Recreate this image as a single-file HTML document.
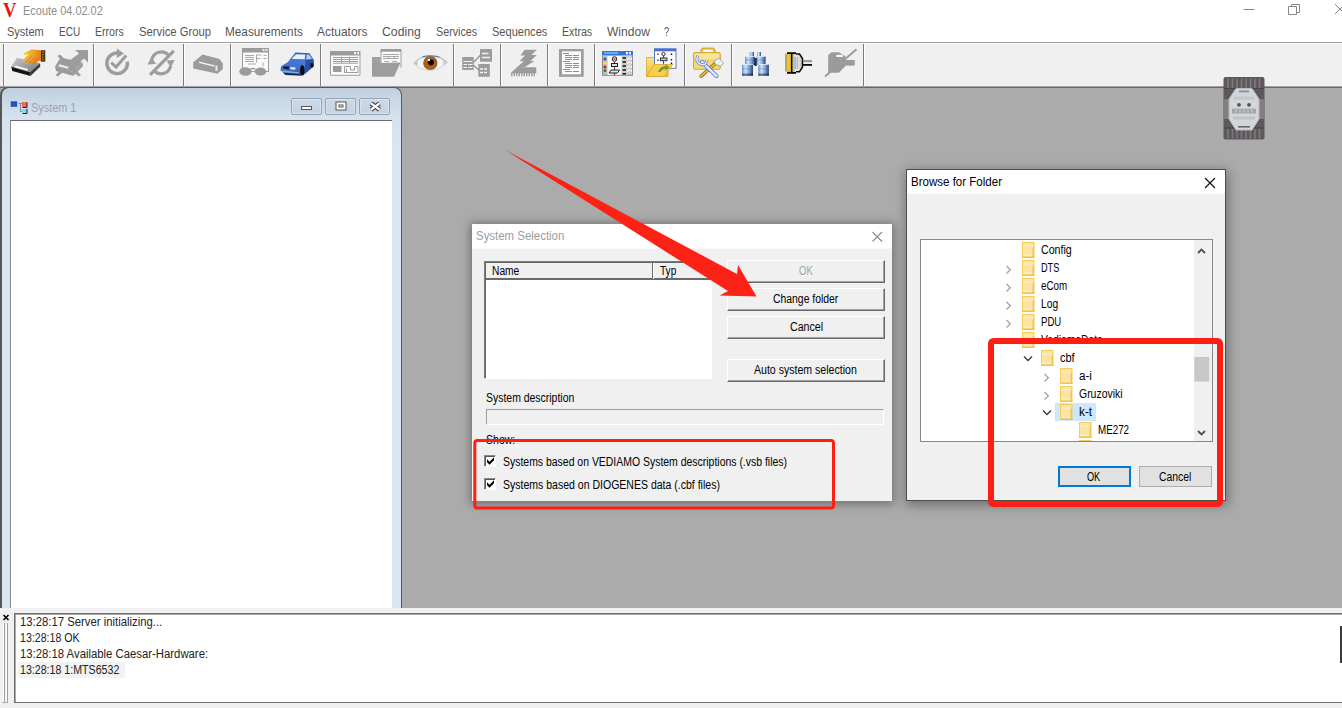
<!DOCTYPE html>
<html lang="en">
<head>
<meta charset="utf-8">
<title>Ecoute 04.02.02</title>
<style>
html,body{margin:0;padding:0;}
body{width:1342px;height:708px;overflow:hidden;background:#fff;position:relative;font-family:"Liberation Sans",sans-serif;font-size:12px;color:#000;}
.abs{position:absolute;}
.t{position:absolute;white-space:nowrap;line-height:1;}
#titlebar{left:0;top:0;width:1342px;height:22px;background:#fff;}
#menubar{left:0;top:22px;width:1342px;height:20px;background:#fff;}
#menubar .t{font-size:12px;color:#555;top:5px;}
#tbline{left:0;top:42px;width:1342px;height:1px;background:#a0a0a0;}
#toolbar{left:0;top:43px;width:1342px;height:43px;background:#f0f0f0;box-shadow:inset 0 1px 0 #fdfdfd;}
.sep{position:absolute;top:1px;width:1px;height:42px;background:#7c7c7c;box-shadow:1px 0 0 #fcfcfc;}
#mdi{left:0;top:86px;width:1342px;height:522px;background:#ababab;}
#bottom{left:0;top:608px;width:1342px;height:100px;background:#f0f0f0;}

.ms{font-size:11px;color:#000;}
.lg{font-size:12px;color:#1a1a1a;}
.tr{font-size:12px;color:#000;}
.cbtn{position:absolute;top:11px;width:31px;height:17px;box-sizing:border-box;border:1px solid #94a4b5;border-radius:2px;background:linear-gradient(#cbd9e7,#c3d3e3);box-shadow:inset 0 0 0 1px rgba(255,255,255,.35);}
.b3d{position:absolute;width:158px;height:23px;box-sizing:border-box;background:#f0f0f0;border-top:1px solid #fff;border-left:1px solid #fff;border-right:1px solid #696969;border-bottom:1px solid #696969;box-shadow:inset -1px -1px 0 #a0a0a0;font-size:11px;line-height:19px;text-align:center;color:#000;white-space:nowrap;}
.chk{position:absolute;width:12px;height:12px;box-sizing:border-box;background:#fff;border-top:1px solid #8a8a8a;border-left:1px solid #8a8a8a;border-right:1px solid #fff;border-bottom:1px solid #fff;box-shadow:inset 1px 1px 0 #555;}
.chk svg{position:absolute;left:-1.5px;top:-2px;}
.wbtn{position:absolute;width:73px;height:21px;box-sizing:border-box;background:#e1e1e1;font-size:12px;text-align:center;color:#000;line-height:17px;}
</style>
</head>
<body>
<!-- ===== title bar ===== -->
<div id="titlebar" class="abs">
  <span class="t" style="left:2.5px;top:0px;font-family:'Liberation Serif',serif;font-weight:bold;font-size:21px;color:#e8140c;transform-origin:0 0;transform:scaleX(.89);">V</span>
  <svg class="abs" style="left:1236px;top:0" width="106" height="22" viewBox="0 0 106 22">
    <path d="M7.5 9.5h11" stroke="#858585" stroke-width="1" fill="none"/>
    <path d="M52.5 6.5h8v8h-8zM55.5 6.5v-2h8v8h-3" stroke="#858585" stroke-width="1" fill="none"/>
    <path d="M99 4l10 10M109 4l-10 10" stroke="#858585" stroke-width="1" fill="none"/>
  </svg>
</div>
<!-- ===== menu bar ===== -->
<div id="menubar" class="abs">
</div>
<div id="tbline" class="abs"></div>
<!-- ===== toolbar ===== -->
<div id="toolbar" class="abs">
  <div class="sep" style="left:3px"></div>
  <div class="sep" style="left:93px"></div>
  <div class="sep" style="left:183px"></div>
  <div class="sep" style="left:230px"></div>
  <div class="sep" style="left:320px"></div>
  <div class="sep" style="left:453px"></div>
  <div class="sep" style="left:500px"></div>
  <div class="sep" style="left:547px"></div>
  <div class="sep" style="left:594px"></div>
  <div class="sep" style="left:684px"></div>
  <div class="sep" style="left:731px"></div>
  <div class="sep" style="left:863px"></div>
    <svg class="abs" style="left:0;top:0" width="1342" height="43" viewBox="0 43 1342 43">
    <defs>
      <linearGradient id="gHand" x1="0" y1="0" x2="1" y2="0"><stop offset="0" stop-color="#f7cf38"/><stop offset=".55" stop-color="#f3a622"/><stop offset="1" stop-color="#e07a1c"/></linearGradient>
      <linearGradient id="gTop" x1="0" y1="0" x2="1" y2="1"><stop offset="0" stop-color="#c9c9cc"/><stop offset="1" stop-color="#77787c"/></linearGradient>
      <linearGradient id="gBino" x1="0" y1="0" x2="1" y2="0"><stop offset="0" stop-color="#6a8fc8"/><stop offset=".3" stop-color="#cfe4f8"/><stop offset=".65" stop-color="#7da2da"/><stop offset="1" stop-color="#2c4474"/></linearGradient>
      <linearGradient id="gBinoV" x1="0" y1="0" x2="0" y2="1"><stop offset="0" stop-color="#000" stop-opacity="0"/><stop offset=".75" stop-color="#000" stop-opacity="0"/><stop offset="1" stop-color="#000" stop-opacity=".75"/></linearGradient>
      <linearGradient id="gFold" x1="0" y1="0" x2="0" y2="1"><stop offset="0" stop-color="#fbe58a"/><stop offset="1" stop-color="#eebb30"/></linearGradient>
      <linearGradient id="gPin" x1="0" y1="0" x2="1" y2="0"><stop offset="0" stop-color="#8a8a90"/><stop offset=".5" stop-color="#f6d21c"/><stop offset="1" stop-color="#c9a238"/></linearGradient>
      <linearGradient id="gPlug" x1="0" y1="0" x2="1" y2="0"><stop offset="0" stop-color="#b4b4b4"/><stop offset=".4" stop-color="#ececec"/><stop offset="1" stop-color="#c4c4c4"/></linearGradient>
      <radialGradient id="gIris" cx=".5" cy=".5" r=".5"><stop offset="0" stop-color="#7e3a0c"/><stop offset=".6" stop-color="#b4661c"/><stop offset="1" stop-color="#a05414"/></radialGradient>
      <linearGradient id="gCar" x1="0" y1="0" x2="0" y2="1"><stop offset="0" stop-color="#2a5cc8"/><stop offset=".5" stop-color="#4f80d8"/><stop offset="1" stop-color="#2850a8"/></linearGradient>
    </defs>
    <!-- 1: device + hand -->
    <g>
      <path d="M17 57.800L40 63.300L30 72.300L11.300 66.800z" fill="url(#gTop)"/>
      <path d="M11.300 66.800L30 72.300L30.500 76L12.300 71z" fill="#131313"/>
      <path d="M30 72.300L40 63.300L40.300 66.500L30.500 76z" fill="#38383a"/>
      <path d="M14.800 65.300L28 69L27.600 70.800L14.300 67.200z" fill="#f6f6f6"/>
      <path d="M41 50.200h4.300v11.500H41z" fill="#44380f"/>
      <path d="M43 51.500v9" stroke="#b8a050" stroke-width="1.200" stroke-dasharray="1.300 1.200"/>
      <path d="M41 50.300L31.500 49.600L24.500 52.800L23.800 54.800L28.500 54.300L23.500 59.500L41 61z" fill="url(#gHand)"/>
      <path d="M30 55L23.800 61" stroke="#f3b82a" stroke-width="2.300" stroke-linecap="round"/>
      <path d="M33.500 56L27.200 62.500" stroke="#f0a428" stroke-width="2.300" stroke-linecap="round"/>
      <path d="M36.500 57L30.800 63.200" stroke="#ec9224" stroke-width="2.300" stroke-linecap="round"/>
      <path d="M39.500 58L34.500 63.300" stroke="#e67f20" stroke-width="2.200" stroke-linecap="round"/>
      <path d="M31.800 55.500L25.500 62M35 56.500L29 63M38 57.500L32.800 63.400" stroke="#c2531a" stroke-width=".7" opacity=".85"/>
    </g>
    <!-- 2: gray device w/ arrow + cross -->
    <g fill="#9c9c9c" stroke="none">
      <path d="M60.500 57.500L82.500 62.500L73 72L55 66.500z"/>
      <path d="M55 66.500L73 72L73.500 76L56 71z" fill="#999"/>
      <path d="M73 72L82.500 62.500L83 66L73.500 76z"/>
      <path d="M88 50H75l4 3.500L68.500 61.500l6 5.500L84 58.500l4 4z"/>
      <path d="M57.500 56l2.500-1.500L81 75l-2.500 1.500z"/>
      <path d="M55.500 75L68 63l2.500 2L58 76.500z"/>
      <path d="M59 64.200l9.500 2.600l-.5 2l-9.500-2.600z" fill="#ededed"/>
    </g>
    <!-- 3: circular arrow + check -->
    <g fill="none" stroke="#9d9d9d">
      <path d="M119.500 53.300A10.300 10.300 0 1 0 127.300 61.500" stroke-width="3.400"/>
      <path d="M116.800 48.600l7.200 4.800l-7.200 4.600z" fill="#9d9d9d" stroke="none"/>
      <path d="M111.200 62.500l4.800 4.500L126.200 55.400" stroke-width="3"/>
    </g>
    <!-- 4: circle arrows + slash -->
    <g fill="none" stroke="#9d9d9d">
      <path d="M151.800 59.500A9.800 9.800 0 0 1 168.500 55" stroke-width="3.200"/>
      <path d="M170.600 66A9.800 9.800 0 0 1 154.500 71.300" stroke-width="3.200"/>
      <path d="M147.500 64.500l4-7.500l4.500 7z" fill="#9d9d9d" stroke="none"/>
      <path d="M166.500 60.500l4.200 7l4-7.500z" fill="#9d9d9d" stroke="none"/>
      <path d="M150 74.800L173.800 50.800" stroke-width="3.200"/>
    </g>
    <!-- 5: gray box/printer -->
    <g>
      <path d="M202.500 54.500L219.500 59L222.800 63.500V69L217.500 73.800L193.200 68.500V62.500z" fill="#9b9b9b"/>
      <path d="M199 61.500L214.500 65.300V66.800L199 63z" fill="#f0f0f0"/>
      <path d="M215.500 65.500h2v5.500h-2z" fill="#e8e8e8"/>
    </g>
    <!-- 6: window + glasses -->
    <g>
      <rect x="242" y="48" width="27" height="23.500" fill="#fbfbfb"/>
      <rect x="242" y="48" width="27" height="4.500" fill="#9b9b9b"/>
      <rect x="262.500" y="49" width="2" height="2" fill="#f0f0f0"/><rect x="265.500" y="49" width="2" height="2" fill="#f0f0f0"/>
      <path d="M242.500 52v19M268.500 52v19.500M242 71.500h27" stroke="#9b9b9b" stroke-width="1" fill="none"/>
      <path d="M245 55.500h9M245 57.500h9M245 59.500h9M245 61.500h9M256.500 54.500v8M256.500 55h5M256.500 58.500h4M263.500 55.500h3M263.500 58.500h3M248 64h8M263 62.500v4" stroke="#a8a8a8" stroke-width="1" fill="none"/>
      <ellipse cx="245.500" cy="71.500" rx="6.200" ry="4.300" fill="#9b9b9b"/>
      <ellipse cx="260.500" cy="71.500" rx="5.800" ry="4" fill="#9b9b9b"/>
      <path d="M250 69.500q3-2 5.500 0" stroke="#9b9b9b" stroke-width="1.500" fill="none"/>
    </g>
    <!-- 7: blue car -->
    <g>
      <path d="M295.500 52.500L309.500 53.200L313.500 59.500L314 66L303 75.500L285 74L280.500 70.500L281 66.500L287.500 62.500z" fill="url(#gCar)"/>
      <path d="M305.500 60L313.500 59.500L314 66L304.500 74z" fill="#2a4fa6"/>
      <path d="M296 54.200L305.200 54.600L304.800 59.200L291.500 59z" fill="#e6f1f5"/>
      <path d="M306.500 54.600L309.300 54.800L311.800 58.800L306.300 59.600z" fill="#b9cfee"/>
      <path d="M281 66.500L287.500 62.500L304 63L300 68z" fill="#4272d4"/>
      <path d="M283.500 66.200l5.500 .600l-.3 2.500l-5.500-.8z" fill="#141414"/>
      <path d="M290.500 67l5 .400l-.3 2.400l-5-.5z" fill="#e9eef8"/>
      <path d="M281.200 70.200L299 72.300L298.700 73.500L283 72.200z" fill="#86acee"/>
      <path d="M283 72.800L299 74.300L302 75.800L285.500 75z" fill="#1a2646"/>
      <ellipse cx="302.300" cy="70.300" rx="2.200" ry="5" fill="#0e0e0e"/>
      <ellipse cx="311.800" cy="65.400" rx="1.500" ry="2.400" fill="#0e0e0e"/>
    </g>
    <!-- 8: window + table -->
    <g>
      <rect x="330" y="51" width="30.500" height="24.800" fill="#fbfbfb"/>
      <rect x="330" y="51" width="30.500" height="4.500" fill="#9b9b9b"/>
      <rect x="354" y="52" width="2" height="2.200" fill="#f4f4f4"/><rect x="357" y="52" width="2" height="2.200" fill="#f4f4f4"/>
      <path d="M330.500 55v20.300h29.500V55" stroke="#9b9b9b" stroke-width="1" fill="none"/>
      <path d="M333 57.500h25M333 59.500h25M333 61.500h25M333 63.200h25M341.500 57v6.500M349.500 57v6.500" stroke="#a0a0a0" stroke-width="1" fill="none"/>
      <rect x="333" y="66" width="8.500" height="6" fill="#9b9b9b"/>
      <path d="M344.500 72.500v-6h6v3.500h4v-3.500h3.500v6zM346.500 72v-3.500" stroke="#9b9b9b" stroke-width="1" fill="none"/>
    </g>
    <!-- 9: folder + window (gray) -->
    <g>
      <path d="M372 57h8.500l1.500 2H394v17.500H372z" fill="#a0a0a0"/>
      <rect x="380.500" y="49" width="21" height="15" fill="#fbfbfb"/>
      <rect x="380.500" y="49" width="21" height="2.700" fill="#9b9b9b"/>
      <path d="M381 51v12M401 51v16.500" stroke="#9b9b9b" stroke-width="1" fill="none"/>
      <path d="M383 54.500h16M383 56.500h16M383 58.500h16M388.500 56v3M394.500 56v3M384 61.500h5M392 61.500h5" stroke="#a8a8a8" stroke-width="1" fill="none"/>
      <path d="M372 63.200L400.500 62.500L394.200 76.500H372z" fill="#9d9d9d"/>
    </g>
    <!-- 10: eye -->
    <g>
      <path d="M413.800 63.500Q421 55.500 431 56Q441 56.200 447.300 62.500Q440 70.200 430 70.300Q420 70.300 413.800 63.500z" fill="#f3f4f6"/>
      <path d="M413.800 63.500Q421 55.500 431 56Q441 56.200 447.300 62.500" stroke="#b4b6c0" stroke-width="1.100" fill="none"/>
      <path d="M413.800 63.500Q420 70.300 430 70.300Q440 70.200 447.300 62.500" stroke="#d4d4d6" stroke-width="1" fill="none"/>
      <path d="M414 63.500l3.500-2.500v5z" fill="#c4c4c8"/>
      <path d="M447 62.500l-4-3v6z" fill="#d0d0d4"/>
      <circle cx="430.300" cy="63" r="7.100" fill="url(#gIris)"/>
      <circle cx="431" cy="62.300" r="3.100" fill="#0a0a0a"/>
      <circle cx="428.900" cy="59.900" r="1.200" fill="#fff"/>
      <path d="M422.500 56.800Q430 54.800 439.500 57" stroke="#6c7c9c" stroke-width="1.200" fill="none"/>
    </g>
    <!-- 11: tree of boxes -->
    <g>
      <rect x="462.200" y="57" width="11.500" height="13" fill="#9c9c9c"/>
      <path d="M463.500 61.500h9M463.500 64.500h9M463.500 67.500h9" stroke="#f2f2f2" stroke-width="1.200"/>
      <path d="M467.500 63v5.500" stroke="#9c9c9c" stroke-width="1"/>
      <rect x="480" y="49" width="12" height="12.700" fill="#9c9c9c"/>
      <path d="M482 53.500h6.500M482 57.500h8" stroke="#f4f4f4" stroke-width="1.600"/>
      <rect x="478.300" y="64" width="11.500" height="12.800" fill="#9c9c9c"/>
      <path d="M480 69h7M480 72.500h7" stroke="#f4f4f4" stroke-width="1.400" stroke-dasharray="3 1"/>
      <path d="M473.500 62.500L480.500 55M473.500 65L478.500 70" stroke="#909090" stroke-width="1.100" fill="none"/>
    </g>
    <!-- 12: lightning + chip -->
    <g fill="#9b9b9b">
      <path d="M524.500 49.800h12.300L531.500 55h5.300L530.500 61h4L524 67.500h-7.500L524 61.200h-4.500L525 55.500h-4.500z"/>
      <path d="M517 67.300H536.300V73.200H510.500z"/>
      <path d="M511.800 73v3.200M514.300 73v3.200M516.800 73v3.200M519.300 73v3.200M521.800 73v3.200M524.300 73v3.200M526.800 73v3.200M529.300 73v3.200M531.800 73v3.200M534.300 73v3.200" stroke="#9b9b9b" stroke-width="1.400"/>
    </g>
    <!-- 13: list document -->
    <g>
      <rect x="559" y="49" width="24.700" height="27.800" fill="#9d9d9d"/>
      <rect x="562" y="51.300" width="19" height="23" fill="#fcfcfc"/>
      <path d="M563 53.500h6M565 55.500h14M565 57.500h14M565 59.500h14M563 61.500h7M565 63.500h14M565 65.500h14M565 67.500h14M563 69.500h7M565 71.500h14" stroke="#8e8e8e" stroke-width="1" fill="none"/>
      <path d="M572.500 55v17" stroke="#fcfcfc" stroke-width=".8"/>
    </g>
    <!-- 14: flowchart window (colour) -->
    <g>
      <rect x="602" y="51" width="31" height="24.800" fill="#fdfdfd"/>
      <rect x="602" y="51" width="31" height="4.600" fill="#3f73d3"/>
      <rect x="604" y="52" width="14" height="2" fill="#54b8e8"/>
      <rect x="626" y="52" width="2" height="2.300" fill="#eef"/><rect x="629" y="52" width="2" height="2.300" fill="#eef"/>
      <rect x="602" y="55.600" width="5.500" height="20.200" fill="#bdbdbd"/>
      <rect x="621.500" y="55.600" width="11.500" height="20.200" fill="#cfcfcf"/>
      <circle cx="605" cy="59" r="1.500" fill="#3050c8"/><circle cx="605" cy="63" r="1.500" fill="#f4ec30"/><circle cx="605" cy="67" r="1.500" fill="#e01818"/><circle cx="605" cy="70.700" r="1.400" fill="#2f7a38"/>
      <path d="M614.500 61.500v14.500" stroke="#d02020" stroke-width="1.200"/>
      <circle cx="614.500" cy="59" r="2.300" fill="#fff" stroke="#222" stroke-width="1"/>
      <path d="M613 57.500l3 3m0-3l-3 3" stroke="#222" stroke-width=".7"/>
      <rect x="611.500" y="63.500" width="6" height="3" fill="#bfeef8" stroke="#222" stroke-width="1"/>
      <path d="M611 70h8.500l-2 3H609z" fill="#bfeef8" stroke="#222" stroke-width="1"/>
      <path d="M622.500 58h3.500M622.500 62h3.500M622.500 66h3.500M622.500 70h3.500M622.500 73.700h3.500" stroke="#111" stroke-width="1.600"/>
      <path d="M627 59.500q2.500-3 5 0M627 63.500q2.500-3 5 0M627 67.500q2.500-3 5 0M627 71.500q2.500-3 5 0" stroke="#fff" stroke-width="1.200" fill="none"/>
      <path d="M602.500 55v20.300H632.500V55" stroke="#8c8c8c" stroke-width="1" fill="none"/>
    </g>
    <!-- 15: folder + flowchart window -->
    <g>
      <path d="M646.500 57.500h9l1.500 2H668V76.500H646.500z" fill="url(#gFold)" stroke="#d8a428" stroke-width=".8"/>
      <rect x="654.500" y="48.800" width="21.500" height="19.500" fill="#fdfdfd" stroke="#5878c8" stroke-width="1"/>
      <rect x="654.500" y="48.800" width="21.500" height="2.500" fill="#4a6ed0"/>
      <path d="M663.500 55.500v9" stroke="#d82020" stroke-width="1.200"/>
      <circle cx="663.500" cy="54" r="1.700" fill="#fff" stroke="#223" stroke-width=".9"/>
      <rect x="660.500" y="58" width="6.500" height="2.700" fill="#8fe0d8" stroke="#223" stroke-width=".9"/>
      <path d="M671.500 53.500v1.500M671.500 59v1.500M671.500 62.500v1.500M658 53.500v1.200M658 59.500v1.200" stroke="#111" stroke-width="1.400"/>
      <path d="M646.800 76.500L654 64.500H672.800L664.500 76.500z" fill="#f6cf4e" stroke="#d8a428" stroke-width=".8"/>
      <path d="M658 72q2-6 7.500-6v-2l4 3.500l-4 3.500v-2q-3.500 0-5 3z" fill="#6a8a3a" opacity=".85"/>
    </g>
    <!-- 16: toolbox + tools -->
    <g>
      <path d="M701.500 53V51q0-2.500 2.500-2.500h8q2.500 0 2.500 2.500v2" stroke="#dcae38" stroke-width="2.200" fill="none"/>
      <rect x="704.500" y="50.300" width="7" height="2" rx="1" fill="#fff"/>
      <rect x="693.500" y="52.500" width="26.800" height="16.800" rx="1.500" fill="#f6d873" stroke="#d6a838" stroke-width="1"/>
      <rect x="695" y="54" width="24" height="5" fill="#fbe9a0" opacity=".8"/>
      <path d="M701 76.200L716 62.800" stroke="#8a6a18" stroke-width="3.400" stroke-linecap="round"/>
      <path d="M701 76.200L716 62.800" stroke="#e8c040" stroke-width="1.800" stroke-linecap="round"/>
      <path d="M714 61l5-3l4.500 5.500l-3 2.500l-5-1.500z" fill="#eef1f6" stroke="#8a8a94" stroke-width=".7"/>
      <path d="M702 62L716.500 76" stroke="#6a88dc" stroke-width="4.200" stroke-linecap="round"/>
      <path d="M702 62L716.500 76" stroke="#e6efff" stroke-width="2.300" stroke-linecap="round"/>
      <path d="M698 55.500q-2.500 4.500 .5 7.500q3 2.800 7 .8l1.500-3.500" stroke="#6f8ae2" stroke-width="3" fill="none"/>
      <path d="M698 55.500q-2.500 4.500 .5 7.500q3 2.800 7 .8l1.500-3.500" stroke="#e6efff" stroke-width="1.300" fill="none"/>
    </g>
    <!-- 17: binoculars -->
    <g>
      <rect x="749.700" y="52" width="4.300" height="5" fill="url(#gBino)"/>
      <rect x="757.300" y="52" width="3.700" height="5" fill="url(#gBino)"/>
      <rect x="745" y="56" width="10" height="9" fill="url(#gBino)"/>
      <rect x="756.300" y="56" width="9.300" height="9" fill="url(#gBino)"/>
      <rect x="742" y="64" width="11" height="11.600" fill="url(#gBino)"/><rect x="742" y="64" width="11" height="11.600" fill="url(#gBinoV)"/>
      <rect x="758.300" y="64" width="10.600" height="11.600" fill="url(#gBino)"/><rect x="758.300" y="64" width="10.600" height="11.600" fill="url(#gBinoV)"/>
      <path d="M745 56.500h10M756.300 56.500h9.300M742 64.500h11M758.300 64.500h10.600" stroke="#e4f0fc" stroke-width="1" opacity=".8"/>
      <path d="M745 60h10M756.300 60h9.300M742 69h11M758.300 69h10.600" stroke="#3c5c96" stroke-width="1" opacity=".35"/>
      <rect x="754.500" y="58" width="2.200" height="8" fill="#1e2a48"/>
    </g>
    <!-- 18: connector plug -->
    <g>
      <rect x="785.200" y="53.800" width="6" height="17.800" fill="url(#gPin)"/>
      <rect x="787" y="52.200" width="9" height="1.800" fill="#0a0a0a"/>
      <rect x="787" y="71.800" width="9" height="2" fill="#0a0a0a"/>
      <rect x="791" y="53" width="1.700" height="19.500" fill="#0a0a0a"/>
      <path d="M792.700 54H799.500L802.500 58.500V67L799.500 71.800H792.700z" fill="url(#gPlug)"/>
      <path d="M796 54h3.500l3 4.500V67l-3 4.800H796" stroke="#0a0a0a" stroke-width="1.500" fill="none"/>
      <path d="M795.200 57v12M797.200 57v12" stroke="#a4a4a4" stroke-width="1"/>
      <rect x="803" y="60" width="9" height="2.200" fill="#9a9a9a"/>
      <rect x="803" y="64" width="9" height="1.800" fill="#0a0a0a"/>
    </g>
    <!-- 19: gray plug + slash -->
    <g fill="#9b9b9b">
      <path d="M828.200 55L831.500 52.200H839L845.500 56.500V66L839 72.800H828.200z"/>
      <rect x="845" y="60" width="9.700" height="5.600"/>
      <rect x="836.300" y="54.800" width="6.500" height="2.200" fill="#f6f6f6"/>
      <path d="M825 76.500L856.500 49.300" stroke="#9b9b9b" stroke-width="2" fill="none"/>
    </g>
  </svg>

</div>
<!-- ===== MDI workspace ===== -->
<div id="mdi" class="abs">
  <!--MDI-->
</div>
<!-- ===== bottom log panel ===== -->
<div id="bottom" class="abs">
    <!-- close x + gripper -->
  <svg class="abs" style="left:0;top:4px" width="14" height="96" viewBox="0 0 14 96">
    <path d="M3.500 3l5 5M8.500 3l-5 5" stroke="#000" stroke-width="1.600" fill="none"/>
    <path d="M3.500 11v79" stroke="#fff" stroke-width="1"/><path d="M4.500 11v79M2.500 90.500h2.500" stroke="#a0a0a0" stroke-width="1"/>
    <path d="M6.500 11v79" stroke="#fff" stroke-width="1"/><path d="M7.500 11v79M5.500 90.500h2.500" stroke="#a0a0a0" stroke-width="1"/>
  </svg>
  <div class="abs" style="left:14px;top:5px;width:1340px;height:90px;box-sizing:border-box;background:#fff;border:1px solid #6d6d6d;box-shadow:inset 1px 1px 0 #a8a8a8;"></div>
  <div class="abs" style="left:18px;top:54px;width:107px;height:16px;background:#f2f2f2;"></div>
  <div class="abs" style="left:1340px;top:18px;width:2px;height:37px;background:#3c3c3c;"></div>

</div>
<!-- MDI sunken top edge -->
<div class="abs" style="left:0;top:86px;width:1342px;height:1px;background:#a2a2a2;"></div>
<div class="abs" style="left:0;top:87px;width:1342px;height:1px;background:#686868;"></div>

<!-- ===== MDI child window "System 1" ===== -->
<div id="child" class="abs" style="left:0;top:87px;width:402px;height:521px;overflow:hidden;">
  <div class="abs" style="left:0;top:0;width:402px;height:530px;background:#575757;border-radius:8px 8px 0 0;"></div>
  <div class="abs" style="left:2px;top:1px;width:399px;height:530px;border-radius:7px 7px 0 0;background:linear-gradient(180deg,#bfcfdf 0px,#c9d8e6 12px,#d6e2ee 30px,#d9e5f1 60px,#d9e5f1 100%);"></div>
  <!-- client -->
  <div class="abs" style="left:10px;top:33px;width:382px;height:500px;background:#fff;border-top:1px solid #6b6b6b;border-left:1px solid #8a8a8a;box-sizing:border-box;"></div>
  <!-- icon -->
  <svg class="abs" style="left:9px;top:12px" width="20" height="16" viewBox="0 0 20 16">
    <path d="M9.5 4.5h4M11.5 4.5v8h3" stroke="#7c8a9a" stroke-width="1" fill="none"/>
    <rect x="1.700" y="2.300" width="6.500" height="5.500" fill="#1f55c0"/>
    <rect x="13" y="3" width="5" height="5" fill="#ee6a5c"/>
    <path d="M13.5 8.5h4.5v-5" stroke="#222" stroke-width="1" fill="none"/>
    <rect x="13" y="10" width="5" height="4" fill="#8fd4f0"/>
    <path d="M13.5 14.5h4.5v-4.5" stroke="#222" stroke-width="1" fill="none"/>
  </svg>
  <!-- caption buttons -->
  <div class="cbtn" style="left:291px;"></div>
  <div class="cbtn" style="left:325px;"></div>
  <div class="cbtn" style="left:359px;"></div>
  <svg class="abs" style="left:291px;top:11px" width="100" height="18" viewBox="0 0 100 18">
    <rect x="10.5" y="8.5" width="10" height="3" fill="#fff" stroke="#555" stroke-width="1"/>
    <rect x="45" y="4" width="10" height="8" fill="#fff" stroke="#555" stroke-width="1"/>
    <rect x="48" y="7" width="4" height="2" fill="#fff" stroke="#555" stroke-width="1"/>
    <path d="M80 5.300l8.500 6.400M88.500 5.300l-8.500 6.400" stroke="#4a4a4a" stroke-width="4.600" fill="none"/>
    <path d="M80 5.300l8.500 6.400M88.500 5.300l-8.500 6.400" stroke="#fff" stroke-width="2.300" fill="none"/>
  </svg>
</div>

<!-- ===== device picture top-right ===== -->
<svg class="abs" style="left:1222px;top:75px" width="44" height="66" viewBox="0 0 44 66">
  <rect x="1.500" y="2" width="41" height="62.500" rx="2" fill="#5d585c"/>
  <rect x="1.500" y="24" width="41" height="20" fill="#827e84"/>
  <path d="M2 13.500h40M2 53h40" stroke="#48444a" stroke-width="1"/>
  <path d="M6 3.500v9.500M10.500 3.500v9.500M15 3.500v9.500M19.500 3.500v9.500M24 3.500v9.500M28.500 3.500v9.500M33 3.500v9.500M37.500 3.500v9.500M6 54v9.500M10.500 54v9.500M15 54v9.500M19.500 54v9.500M24 54v9.500M28.500 54v9.500M33 54v9.500M37.500 54v9.500" stroke="#7d797c" stroke-width="1.600"/>
  <path d="M14 13.500h16l7 10.500v20l-7 11H14l-7-11V24z" fill="#d2d6d9" stroke="#b6babd" stroke-width="1"/>
  <rect x="10" y="33.700" width="24" height="4.800" fill="#a4a6a9"/>
  <rect x="11" y="41.500" width="22" height="3" fill="#bfc3c6"/>
  <rect x="12" y="21.500" width="20" height="3" fill="#c2c6c9"/>
  <path d="M14 34.500v3M18 34.500v3M22 34.500v3M26 34.500v3M30 34.500v3" stroke="#c9cccf" stroke-width="1.200"/>
  <circle cx="17" cy="29.800" r="1.900" fill="#50535a"/>
  <circle cx="27" cy="29.800" r="1.900" fill="#50535a"/>
  <rect x="17" y="15.500" width="10" height="1.800" fill="#7d8fa8"/>
  <rect x="16" y="51" width="12" height="1.600" fill="#63666a"/>
</svg>
<!-- ===== System Selection dialog ===== -->
<div id="sysdlg" class="abs" style="left:472px;top:224px;width:420px;height:277px;background:#f0f0f0;box-shadow:0 1px 9px 2px rgba(0,0,0,.34);">
  <div class="abs" style="left:0;top:0;width:420px;height:24px;background:#fff;border-bottom:1px solid #f8f8f8;"></div>
  <svg class="abs" style="left:398px;top:6px" width="14" height="14" viewBox="0 0 14 14"><path d="M2.5 2l9.5 9.5M12 2l-9.500 9.500" stroke="#8a8a8a" stroke-width="1.1" fill="none"/></svg>
  <!-- list view -->
  <div class="abs" style="left:12px;top:37px;width:228px;height:118px;background:#fff;box-sizing:border-box;border-top:1px solid #7a7a7a;border-left:1px solid #7a7a7a;border-right:1px solid #fff;border-bottom:1px solid #fff;box-shadow:inset 1px 1px 0 #666;">
    <div class="abs" style="left:1px;top:1px;width:225px;height:15px;background:#f0f0f0;border-bottom:2px solid #6a6a6a;"></div>
    <div class="abs" style="left:167px;top:1px;width:1px;height:16px;background:#696969;box-shadow:1px 0 0 #fff;"></div>
  </div>
  <!-- buttons -->
  <div class="b3d" style="left:255px;top:36px;color:#a0a0a0;text-shadow:1px 1px 0 #fff;"></div>
  <div class="b3d" style="left:255px;top:64px;"></div>
  <div class="b3d" style="left:255px;top:92px;"></div>
  <div class="b3d" style="left:255px;top:135px;"></div>
  <div class="abs" style="left:14px;top:185px;width:398px;height:16px;box-sizing:border-box;background:#f0f0f0;border-top:1px solid #a0a0a0;border-left:1px solid #a0a0a0;border-right:1px solid #fff;border-bottom:1px solid #fff;"></div>
  <!-- checkboxes -->
  <div class="chk" style="left:12px;top:231px;"><svg width="13" height="13" viewBox="0 0 13 13"><path d="M3 5.200l2.500 2.500l4.500-4.500v3l-4.500 4.500l-2.500-2.500z" fill="#000"/></svg></div>
  <div class="chk" style="left:12px;top:254px;"><svg width="13" height="13" viewBox="0 0 13 13"><path d="M3 5.200l2.500 2.500l4.500-4.500v3l-4.500 4.500l-2.500-2.500z" fill="#000"/></svg></div>
</div>
<!-- ===== Browse for Folder dialog ===== -->
<div id="brdlg" class="abs" style="left:906px;top:169px;width:320px;height:332px;box-sizing:border-box;background:#f0f0f0;border:1px solid #4d4d4d;box-shadow:1px 3px 11px 1px rgba(0,0,0,.36);">
  <div class="abs" style="left:0;top:0;width:318px;height:23px;background:#fff;border-bottom:1px solid #f8f8f8;"></div>
  <svg class="abs" style="left:296px;top:6px" width="14" height="14" viewBox="0 0 14 14"><path d="M2 2l10 10M12 2l-10 10" stroke="#111" stroke-width="1.2" fill="none"/></svg>
  <!-- tree -->
  <div id="tree" class="abs" style="left:13px;top:69px;width:293px;height:203px;box-sizing:border-box;background:#fff;border:1px solid #828790;overflow:hidden;">
    <svg class="abs fold" style="left:101px;top:2px" width="13" height="17" viewBox="0 0 13 17"><rect x="0.500" y="0.500" width="11.500" height="15" fill="#fbe4a2" stroke="#f5cc5a" stroke-width="1"/><rect x="1" y="3.500" width="10" height="1" fill="#fdf1c8"/><rect x="1" y="12.500" width="10" height="1" fill="#fdf1c8"/><path d="M10.500 15.500V6l1.500-3v12.500z" fill="#f2c650"/><rect x="0" y="14.500" width="12.500" height="1.500" fill="#f3c345"/></svg>
<svg class="abs fold" style="left:101px;top:20px" width="13" height="17" viewBox="0 0 13 17"><rect x="0.500" y="0.500" width="11.500" height="15" fill="#fbe4a2" stroke="#f5cc5a" stroke-width="1"/><rect x="1" y="3.500" width="10" height="1" fill="#fdf1c8"/><rect x="1" y="12.500" width="10" height="1" fill="#fdf1c8"/><path d="M10.500 15.500V6l1.500-3v12.500z" fill="#f2c650"/><rect x="0" y="14.500" width="12.500" height="1.500" fill="#f3c345"/></svg>
<svg class="abs" style="left:84px;top:24.5px" width="8" height="10" viewBox="0 0 8 10"><path d="M1.500 1l3.800 3.800l-3.800 3.800" stroke="#a6a6a6" stroke-width="1.400" fill="none"/></svg>
<svg class="abs fold" style="left:101px;top:38px" width="13" height="17" viewBox="0 0 13 17"><rect x="0.500" y="0.500" width="11.500" height="15" fill="#fbe4a2" stroke="#f5cc5a" stroke-width="1"/><rect x="1" y="3.500" width="10" height="1" fill="#fdf1c8"/><rect x="1" y="12.500" width="10" height="1" fill="#fdf1c8"/><path d="M10.500 15.500V6l1.500-3v12.500z" fill="#f2c650"/><rect x="0" y="14.500" width="12.500" height="1.500" fill="#f3c345"/></svg>
<svg class="abs" style="left:84px;top:42.5px" width="8" height="10" viewBox="0 0 8 10"><path d="M1.500 1l3.800 3.800l-3.800 3.800" stroke="#a6a6a6" stroke-width="1.400" fill="none"/></svg>
<svg class="abs fold" style="left:101px;top:56px" width="13" height="17" viewBox="0 0 13 17"><rect x="0.500" y="0.500" width="11.500" height="15" fill="#fbe4a2" stroke="#f5cc5a" stroke-width="1"/><rect x="1" y="3.500" width="10" height="1" fill="#fdf1c8"/><rect x="1" y="12.500" width="10" height="1" fill="#fdf1c8"/><path d="M10.500 15.500V6l1.500-3v12.500z" fill="#f2c650"/><rect x="0" y="14.500" width="12.500" height="1.500" fill="#f3c345"/></svg>
<svg class="abs" style="left:84px;top:60.5px" width="8" height="10" viewBox="0 0 8 10"><path d="M1.500 1l3.800 3.800l-3.800 3.800" stroke="#a6a6a6" stroke-width="1.400" fill="none"/></svg>
<svg class="abs fold" style="left:101px;top:74px" width="13" height="17" viewBox="0 0 13 17"><rect x="0.500" y="0.500" width="11.500" height="15" fill="#fbe4a2" stroke="#f5cc5a" stroke-width="1"/><rect x="1" y="3.500" width="10" height="1" fill="#fdf1c8"/><rect x="1" y="12.500" width="10" height="1" fill="#fdf1c8"/><path d="M10.500 15.500V6l1.500-3v12.500z" fill="#f2c650"/><rect x="0" y="14.500" width="12.500" height="1.500" fill="#f3c345"/></svg>
<svg class="abs" style="left:84px;top:78.5px" width="8" height="10" viewBox="0 0 8 10"><path d="M1.500 1l3.800 3.800l-3.800 3.800" stroke="#a6a6a6" stroke-width="1.400" fill="none"/></svg>
<svg class="abs fold" style="left:101px;top:92px" width="13" height="17" viewBox="0 0 13 17"><rect x="0.500" y="0.500" width="11.500" height="15" fill="#fbe4a2" stroke="#f5cc5a" stroke-width="1"/><rect x="1" y="3.500" width="10" height="1" fill="#fdf1c8"/><rect x="1" y="12.500" width="10" height="1" fill="#fdf1c8"/><path d="M10.500 15.500V6l1.500-3v12.500z" fill="#f2c650"/><rect x="0" y="14.500" width="12.500" height="1.500" fill="#f3c345"/></svg>
<svg class="abs" style="left:83px;top:97px" width="11" height="8" viewBox="0 0 11 8"><path d="M1 1.500l4 4l4-4" stroke="#404040" stroke-width="1.500" fill="none"/></svg>
<svg class="abs fold" style="left:120px;top:110px" width="13" height="17" viewBox="0 0 13 17"><rect x="0.500" y="0.500" width="11.500" height="15" fill="#fbe4a2" stroke="#f5cc5a" stroke-width="1"/><rect x="1" y="3.500" width="10" height="1" fill="#fdf1c8"/><rect x="1" y="12.500" width="10" height="1" fill="#fdf1c8"/><path d="M10.500 15.500V6l1.500-3v12.500z" fill="#f2c650"/><rect x="0" y="14.500" width="12.500" height="1.500" fill="#f3c345"/></svg>
<svg class="abs" style="left:102px;top:115px" width="11" height="8" viewBox="0 0 11 8"><path d="M1 1.500l4 4l4-4" stroke="#404040" stroke-width="1.500" fill="none"/></svg>
<svg class="abs fold" style="left:139px;top:128px" width="13" height="17" viewBox="0 0 13 17"><rect x="0.500" y="0.500" width="11.500" height="15" fill="#fbe4a2" stroke="#f5cc5a" stroke-width="1"/><rect x="1" y="3.500" width="10" height="1" fill="#fdf1c8"/><rect x="1" y="12.500" width="10" height="1" fill="#fdf1c8"/><path d="M10.500 15.500V6l1.500-3v12.500z" fill="#f2c650"/><rect x="0" y="14.500" width="12.500" height="1.500" fill="#f3c345"/></svg>
<svg class="abs" style="left:122px;top:132.5px" width="8" height="10" viewBox="0 0 8 10"><path d="M1.500 1l3.800 3.800l-3.800 3.800" stroke="#a6a6a6" stroke-width="1.400" fill="none"/></svg>
<svg class="abs fold" style="left:139px;top:146px" width="13" height="17" viewBox="0 0 13 17"><rect x="0.500" y="0.500" width="11.500" height="15" fill="#fbe4a2" stroke="#f5cc5a" stroke-width="1"/><rect x="1" y="3.500" width="10" height="1" fill="#fdf1c8"/><rect x="1" y="12.500" width="10" height="1" fill="#fdf1c8"/><path d="M10.500 15.500V6l1.500-3v12.500z" fill="#f2c650"/><rect x="0" y="14.500" width="12.500" height="1.500" fill="#f3c345"/></svg>
<svg class="abs" style="left:122px;top:150.5px" width="8" height="10" viewBox="0 0 8 10"><path d="M1.500 1l3.800 3.800l-3.800 3.800" stroke="#a6a6a6" stroke-width="1.400" fill="none"/></svg>
<div class="abs" style="left:134px;top:163px;width:41px;height:18px;background:#cce8ff;"></div>
<svg class="abs fold" style="left:139px;top:164px" width="13" height="17" viewBox="0 0 13 17"><rect x="0.500" y="0.500" width="11.500" height="15" fill="#fbe4a2" stroke="#f5cc5a" stroke-width="1"/><rect x="1" y="3.500" width="10" height="1" fill="#fdf1c8"/><rect x="1" y="12.500" width="10" height="1" fill="#fdf1c8"/><path d="M10.500 15.500V6l1.500-3v12.500z" fill="#f2c650"/><rect x="0" y="14.500" width="12.500" height="1.500" fill="#f3c345"/></svg>
<svg class="abs" style="left:121px;top:169px" width="11" height="8" viewBox="0 0 11 8"><path d="M1 1.500l4 4l4-4" stroke="#404040" stroke-width="1.500" fill="none"/></svg>
<svg class="abs fold" style="left:158px;top:182px" width="13" height="17" viewBox="0 0 13 17"><rect x="0.500" y="0.500" width="11.500" height="15" fill="#fbe4a2" stroke="#f5cc5a" stroke-width="1"/><rect x="1" y="3.500" width="10" height="1" fill="#fdf1c8"/><rect x="1" y="12.500" width="10" height="1" fill="#fdf1c8"/><path d="M10.500 15.500V6l1.500-3v12.500z" fill="#f2c650"/><rect x="0" y="14.500" width="12.500" height="1.500" fill="#f3c345"/></svg>
<svg class="abs fold" style="left:158px;top:200px" width="13" height="17" viewBox="0 0 13 17"><rect x="0.500" y="0.500" width="11.500" height="15" fill="#fbe4a2" stroke="#f5cc5a" stroke-width="1"/><rect x="1" y="3.500" width="10" height="1" fill="#fdf1c8"/><rect x="1" y="12.500" width="10" height="1" fill="#fdf1c8"/><path d="M10.500 15.500V6l1.500-3v12.500z" fill="#f2c650"/><rect x="0" y="14.500" width="12.500" height="1.500" fill="#f3c345"/></svg>

    <!-- scrollbar -->
    <div class="abs" style="left:273px;top:0;width:18px;height:201px;background:#f0f0f0;"></div>
    <svg class="abs" style="left:273px;top:0" width="18" height="201" viewBox="0 0 18 201">
      <path d="M4 13l3.500-3.500l3.500 3.500" stroke="#505050" stroke-width="1.800" fill="none"/>
      <path d="M4 191l3.500 3.500l3.500-3.500" stroke="#505050" stroke-width="1.800" fill="none"/>
      <rect x="0.300" y="117" width="15" height="24.600" fill="#c6c8c8"/>
    </svg>
  </div>
  <div class="wbtn" style="left:151px;top:296px;border:2px solid #0078d7;"></div>
  <div class="wbtn" style="left:232px;top:296px;border:1px solid #adadad;"></div>
</div>
<!-- ===== text layer (body coordinates) ===== -->
<div id="textlayer" class="abs" style="left:0;top:0;width:1342px;height:708px;overflow:hidden;">
<span class="t" style="left:22.80px;top:5px;font-size:12px;color:#8d8d8d;transform-origin:0 0;transform:scaleX(0.9130);">Ecoute 04.02.02</span>
<span class="t" style="left:6.70px;top:26px;font-size:12px;color:#555;transform-origin:0 0;transform:scaleX(0.9172);">System</span>
<span class="t" style="left:58.60px;top:26px;font-size:12px;color:#555;transform-origin:0 0;transform:scaleX(0.8350);">ECU</span>
<span class="t" style="left:94.80px;top:26px;font-size:12px;color:#555;transform-origin:0 0;transform:scaleX(0.8786);">Errors</span>
<span class="t" style="left:138.50px;top:26px;font-size:12px;color:#555;transform-origin:0 0;transform:scaleX(0.9374);">Service Group</span>
<span class="t" style="left:225.20px;top:26px;font-size:12px;color:#555;transform-origin:0 0;transform:scaleX(0.9803);">Measurements</span>
<span class="t" style="left:317.30px;top:26px;font-size:12px;color:#555;transform-origin:0 0;transform:scaleX(0.9963);">Actuators</span>
<span class="t" style="left:382.40px;top:26px;font-size:12px;color:#555;transform-origin:0 0;transform:scaleX(1.0200);">Coding</span>
<span class="t" style="left:435.60px;top:26px;font-size:12px;color:#555;transform-origin:0 0;transform:scaleX(0.8954);">Services</span>
<span class="t" style="left:491.60px;top:26px;font-size:12px;color:#555;transform-origin:0 0;transform:scaleX(0.9209);">Sequences</span>
<span class="t" style="left:561.50px;top:26px;font-size:12px;color:#555;transform-origin:0 0;transform:scaleX(0.8880);">Extras</span>
<span class="t" style="left:606.50px;top:26px;font-size:12px;color:#555;transform-origin:0 0;transform:scaleX(1.0043);">Window</span>
<span class="t" style="left:663.80px;top:26px;font-size:12px;color:#555;transform-origin:0 0;transform:scaleX(0.7714);">?</span>
<span class="t" style="left:31.30px;top:102px;font-size:12px;color:#9ba4b3;transform-origin:0 0;transform:scaleX(0.9078);">System 1</span>
<span class="t" style="left:475.70px;top:230px;font-size:12px;color:#9c9c9c;transform-origin:0 0;transform:scaleX(0.9529);">System Selection</span>
<span class="t" style="left:491.60px;top:265px;font-size:12px;color:#000;transform-origin:0 0;transform:scaleX(0.8535);">Name</span>
<span class="t" style="left:660.30px;top:265px;font-size:12px;color:#000;transform-origin:0 0;transform:scaleX(0.8389);">Typ</span>
<span class="t" style="left:798.50px;top:265px;font-size:12px;color:#a0a0a0;transform-origin:0 0;transform:scaleX(0.8019);text-shadow:1px 1px 0 #fff;">OK</span>
<span class="t" style="left:772.70px;top:293px;font-size:12px;color:#000;transform-origin:0 0;transform:scaleX(0.8662);">Change folder</span>
<span class="t" style="left:789.60px;top:321px;font-size:12px;color:#000;transform-origin:0 0;transform:scaleX(0.8859);">Cancel</span>
<span class="t" style="left:754.10px;top:364px;font-size:12px;color:#000;transform-origin:0 0;transform:scaleX(0.8807);">Auto system selection</span>
<span class="t" style="left:486.40px;top:391.5px;font-size:12px;color:#000;transform-origin:0 0;transform:scaleX(0.8709);">System description</span>
<span class="t" style="left:486.40px;top:434px;font-size:12px;color:#000;transform-origin:0 0;transform:scaleX(0.8783);">Show:</span>
<span class="t" style="left:502.60px;top:456px;font-size:12px;color:#000;transform-origin:0 0;transform:scaleX(0.8709);">Systems based on VEDIAMO System descriptions (.vsb files)</span>
<span class="t" style="left:502.60px;top:479px;font-size:12px;color:#000;transform-origin:0 0;transform:scaleX(0.8766);">Systems based on DIOGENES data (.cbf files)</span>
<span class="t" style="left:910.80px;top:176px;font-size:12px;color:#000;transform-origin:0 0;transform:scaleX(0.9609);">Browse for Folder</span>
<span class="t" style="left:1041.00px;top:244px;font-size:12px;color:#000;transform-origin:0 0;transform:scaleX(0.8879);">Config</span>
<span class="t" style="left:1041.00px;top:262px;font-size:12px;color:#000;transform-origin:0 0;transform:scaleX(0.7626);">DTS</span>
<span class="t" style="left:1041.00px;top:280px;font-size:12px;color:#000;transform-origin:0 0;transform:scaleX(0.8122);">eCom</span>
<span class="t" style="left:1040.70px;top:298px;font-size:12px;color:#000;transform-origin:0 0;transform:scaleX(0.8528);">Log</span>
<span class="t" style="left:1040.70px;top:316px;font-size:12px;color:#000;transform-origin:0 0;transform:scaleX(0.7985);">PDU</span>
<span class="t" style="left:1040.70px;top:334px;font-size:12px;color:#000;transform-origin:0 0;transform:scaleX(0.8581);">VediamoData</span>
<span class="t" style="left:1060.00px;top:352px;font-size:12px;color:#000;transform-origin:0 0;transform:scaleX(0.9116);">cbf</span>
<span class="t" style="left:1078.80px;top:370px;font-size:12px;color:#000;transform-origin:0 0;transform:scaleX(0.9708);">a-i</span>
<span class="t" style="left:1078.80px;top:388px;font-size:12px;color:#000;transform-origin:0 0;transform:scaleX(0.8714);">Gruzoviki</span>
<span class="t" style="left:1078.80px;top:406px;font-size:12px;color:#000;transform-origin:0 0;transform:scaleX(0.9860);">k-t</span>
<span class="t" style="left:1097.90px;top:424px;font-size:12px;color:#000;transform-origin:0 0;transform:scaleX(0.8162);">ME272</span>
<span class="t" style="left:1087.20px;top:471px;font-size:12px;color:#000;transform-origin:0 0;transform:scaleX(0.7615);">OK</span>
<span class="t" style="left:1158.60px;top:471px;font-size:12px;color:#000;transform-origin:0 0;transform:scaleX(0.8641);">Cancel</span>
<span class="t" style="left:19.90px;top:616px;font-size:12px;color:#222;transform-origin:0 0;transform:scaleX(0.9434);">13:28:17 Server initializing...</span>
<span class="t" style="left:19.90px;top:632px;font-size:12px;color:#222;transform-origin:0 0;transform:scaleX(0.8860);">13:28:18 OK</span>
<span class="t" style="left:19.90px;top:648px;font-size:12px;color:#222;transform-origin:0 0;transform:scaleX(0.9441);">13:28:18 Available Caesar-Hardware:</span>
<span class="t" style="left:19.90px;top:664px;font-size:12px;color:#222;transform-origin:0 0;transform:scaleX(0.8861);">13:28:18 1:MTS6532</span>
</div>
<!-- ===== red annotations ===== -->
<svg class="abs" style="left:0;top:0;pointer-events:none" width="1342" height="708" viewBox="0 0 1342 708">
  <polygon points="504,149.300 737,274 738,265 756.500,296.600 719.500,295.600 728,291" fill="#fd2216"/>
  <rect x="474.800" y="440.500" width="358.700" height="67.500" rx="2.500" fill="none" stroke="#fd1f14" stroke-width="3"/>
  <rect x="991" y="341" width="229" height="163" rx="2.500" fill="none" stroke="#fd1f14" stroke-width="6"/>
</svg>

</body>
</html>
